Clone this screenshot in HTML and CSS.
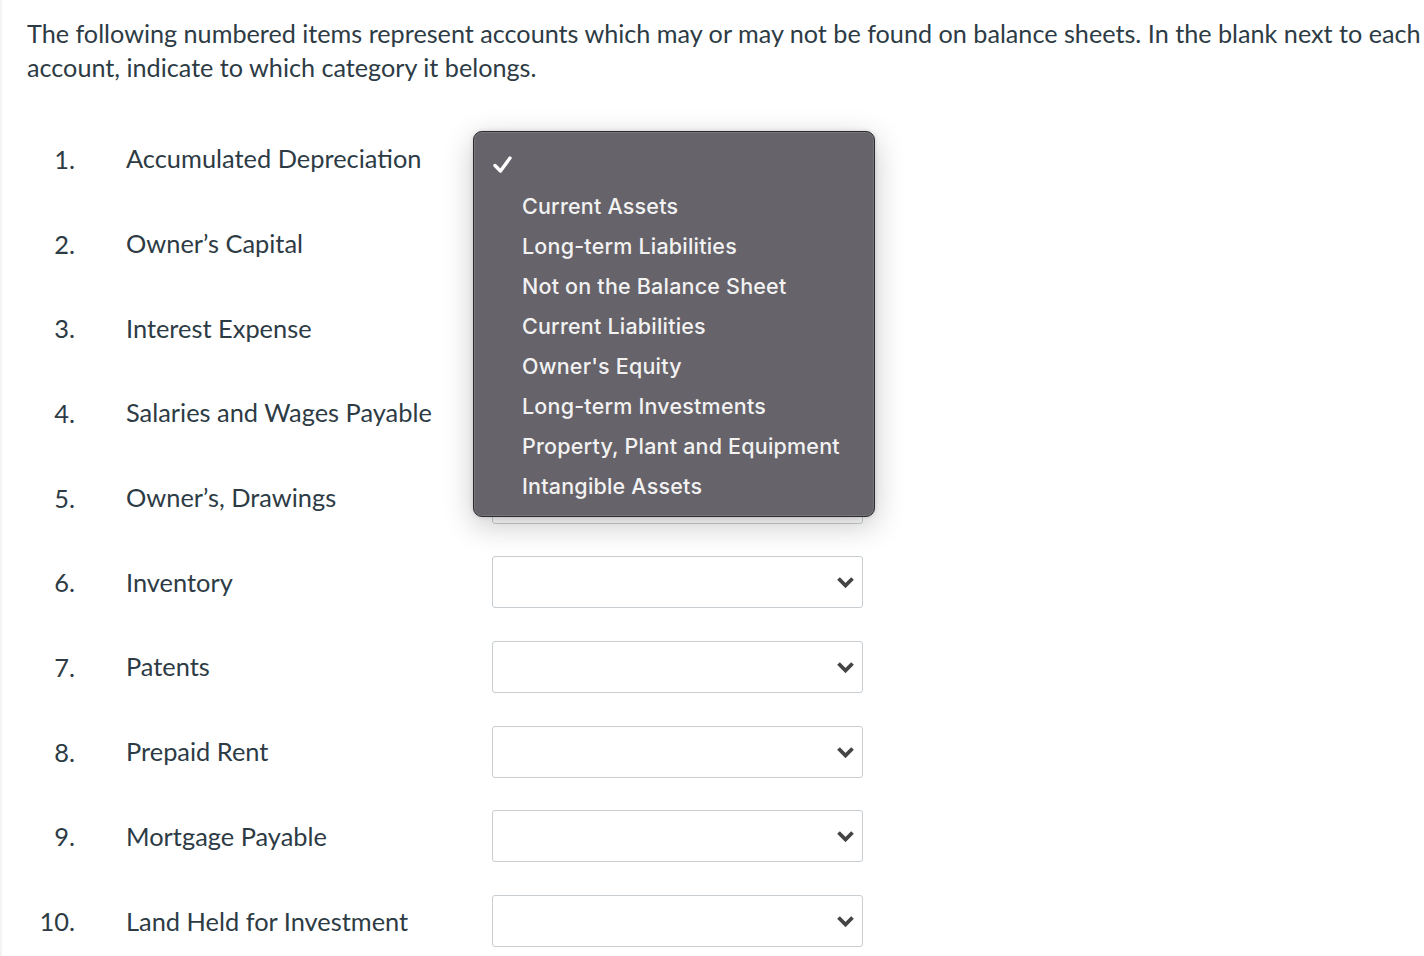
FILE: index.html
```html
<!DOCTYPE html>
<html lang="en">
<head>
  <meta charset="UTF-8">
  <title>Balance Sheet Categories</title>
  <link rel="stylesheet" href="styles.css">
</head>
<body>
  <div class="page">
    <p class="intro">The following numbered items represent accounts which may or may not be found on balance sheets. In the blank next to each account, indicate to which category it belongs.</p>

    <div class="list">
      <div class="row"><span class="num">1.</span><span class="label">Accumulated Depreciation</span><div class="select"><svg viewBox="0 0 19 12" width="19" height="12"><path d="M2.5 2.5 L9.5 9.5 L16.5 2.5"/></svg></div></div>
      <div class="row"><span class="num">2.</span><span class="label">Owner’s Capital</span><div class="select"><svg viewBox="0 0 19 12" width="19" height="12"><path d="M2.5 2.5 L9.5 9.5 L16.5 2.5"/></svg></div></div>
      <div class="row"><span class="num">3.</span><span class="label">Interest Expense</span><div class="select"><svg viewBox="0 0 19 12" width="19" height="12"><path d="M2.5 2.5 L9.5 9.5 L16.5 2.5"/></svg></div></div>
      <div class="row"><span class="num">4.</span><span class="label">Salaries and Wages Payable</span><div class="select"><svg viewBox="0 0 19 12" width="19" height="12"><path d="M2.5 2.5 L9.5 9.5 L16.5 2.5"/></svg></div></div>
      <div class="row"><span class="num">5.</span><span class="label">Owner’s, Drawings</span><div class="select"><svg viewBox="0 0 19 12" width="19" height="12"><path d="M2.5 2.5 L9.5 9.5 L16.5 2.5"/></svg></div></div>
      <div class="row"><span class="num">6.</span><span class="label">Inventory</span><div class="select"><svg viewBox="0 0 19 12" width="19" height="12"><path d="M2.5 2.5 L9.5 9.5 L16.5 2.5"/></svg></div></div>
      <div class="row"><span class="num">7.</span><span class="label">Patents</span><div class="select"><svg viewBox="0 0 19 12" width="19" height="12"><path d="M2.5 2.5 L9.5 9.5 L16.5 2.5"/></svg></div></div>
      <div class="row"><span class="num">8.</span><span class="label">Prepaid Rent</span><div class="select"><svg viewBox="0 0 19 12" width="19" height="12"><path d="M2.5 2.5 L9.5 9.5 L16.5 2.5"/></svg></div></div>
      <div class="row"><span class="num">9.</span><span class="label">Mortgage Payable</span><div class="select"><svg viewBox="0 0 19 12" width="19" height="12"><path d="M2.5 2.5 L9.5 9.5 L16.5 2.5"/></svg></div></div>
      <div class="row"><span class="num">10.</span><span class="label">Land Held for Investment</span><div class="select"><svg viewBox="0 0 19 12" width="19" height="12"><path d="M2.5 2.5 L9.5 9.5 L16.5 2.5"/></svg></div></div>

      <!-- open native popup of the 5th select -->
      <ul class="menu">
        <li class="checked"><svg viewBox="0 0 19 17" width="19" height="17"><path d="M2 9.5 L7.5 15 L17 2"/></svg></li>
        <li>Current Assets</li>
        <li>Long-term Liabilities</li>
        <li>Not on the Balance Sheet</li>
        <li>Current Liabilities</li>
        <li>Owner's Equity</li>
        <li>Long-term Investments</li>
        <li>Property, Plant and Equipment</li>
        <li>Intangible Assets</li>
      </ul>
    </div>
  </div>
</body>
</html>
```

FILE: styles.css
```css
body {
  margin: 0;
  background: #fff;
  font-family: Lato, "Liberation Sans", sans-serif;
  color: #2d3b45;
}

.page {
  border-left: 2px solid #f4f4f4;
  padding: 16px 0 0 25px;
}

.intro {
  margin: 0;
  font-size: 25.2px;
  line-height: 34px;
  max-width: 1400px;
}

.list {
  position: relative;
  margin-top: 32.5px;
}

.row {
  display: grid;
  grid-template-columns: 48px 315px 371px;
  column-gap: 51px;
  align-items: center;
  height: 84.7px;
  font-size: 25.4px;
}

.row .num {
  text-align: right;
}

.row .label {
  margin-top: -1px;
}

.select {
  box-sizing: border-box;
  height: 52px;
  border: 1px solid #c7cdd1;
  border-radius: 3px;
  background: #fff;
  display: flex;
  align-items: center;
  justify-content: flex-end;
  padding-right: 7px;
}

.select svg path {
  fill: none;
  stroke: #444;
  stroke-width: 3.8;
}

.menu {
  position: absolute;
  left: 446px;
  top: 14.5px;
  width: 402px;
  box-sizing: border-box;
  margin: 0;
  padding: 14px 0 10px;
  list-style: none;
  background: #66636a;
  border: 1px solid #2c2c2e;
  border-radius: 9px;
  box-shadow: inset 0 0 0 1px rgba(255, 255, 255, 0.12), 0 8px 30px rgba(0, 0, 0, 0.22), 0 0 4px rgba(0, 0, 0, 0.15);
  font-family: Inter, "Noto Sans", sans-serif;
  font-size: 21.5px;
  font-weight: 500;
  letter-spacing: 0.2px;
  color: #f2f2f2;
}

.menu li {
  height: 40px;
  line-height: 40px;
  padding-left: 48px;
}

.menu li.checked {
  padding-left: 19px;
  display: flex;
  align-items: center;
}

.menu li.checked svg {
  margin-top: -3px;
}

.menu li.checked path {
  fill: none;
  stroke: #fff;
  stroke-width: 3.4;
  stroke-linecap: round;
  stroke-linejoin: round;
}
```
